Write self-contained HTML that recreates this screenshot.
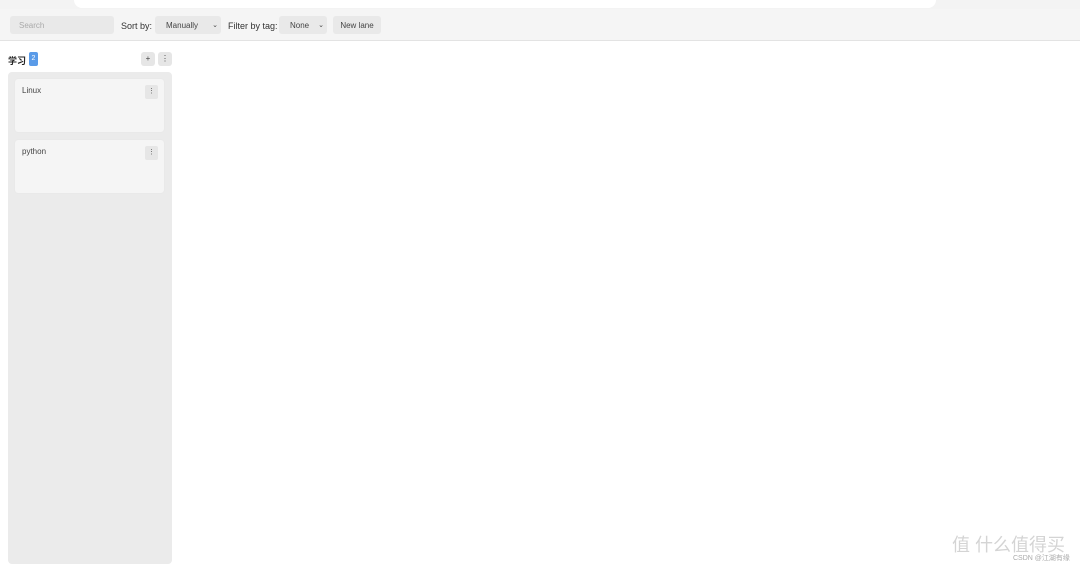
<!DOCTYPE html>
<html><head><meta charset="utf-8"><style>
*{box-sizing:border-box;margin:0;padding:0}
body{width:1080px;height:565px;background:#fff;font-family:"Liberation Sans","Noto Sans CJK SC",sans-serif;position:relative;overflow:hidden}
.chrome{position:absolute;left:0;top:0;width:1080px;height:9px;background:#f3f3f3}
.addr{position:absolute;left:74px;top:-8px;width:862px;height:16px;background:#fff;border-radius:8px}
.bar{position:absolute;left:0;top:9px;width:1080px;height:32px;background:#f5f5f5;border-bottom:1px solid #e3e3e3}
.ctl{position:absolute;top:7px;height:18px;background:#e9e9e9;border-radius:3px;font-size:8px;color:#444;line-height:20px}
.lbl{position:absolute;top:7px;font-size:9px;color:#333;line-height:20px}
.lane{position:absolute;left:8px;top:72px;width:164px;height:492px;background:#ebebeb;border-radius:4px}
.card{position:absolute;left:7px;width:149px;height:53px;background:#f5f5f5;border-radius:3px;box-shadow:0 0 1px #ddd}
.card span{position:absolute;left:7px;top:7px;font-size:8px;color:#444}
.mb{position:absolute;right:6px;top:6px;width:13px;height:14px;background:#e6e6e6;border-radius:2px;font-size:7px;text-align:center;line-height:14px;color:#555}
.btn{position:absolute;top:52px;width:14px;height:14px;background:#e6e6e6;border-radius:3px;font-size:8px;text-align:center;line-height:14px;color:#444}
</style></head><body>
<div class="chrome"><div class="addr"></div></div>
<div class="bar">
<div class="ctl" style="left:10px;width:104px;padding-left:9px;color:#aaa">Search</div>
<div class="lbl" style="left:121px">Sort by:</div>
<div class="ctl" style="left:155px;width:66px;padding-left:11px">Manually<span style="position:absolute;right:3px;font-size:7px">⌄</span></div>
<div class="lbl" style="left:228px">Filter by tag:</div>
<div class="ctl" style="left:279px;width:48px;padding-left:11px">None<span style="position:absolute;right:3px;font-size:7px">⌄</span></div>
<div class="ctl" style="left:333px;width:48px;text-align:center">New lane</div>
</div>
<div style="position:absolute;left:8px;top:54px;font-size:9px;font-weight:bold;color:#222">学习</div>
<div style="position:absolute;left:29px;top:52px;width:9px;height:14px;background:#5a9be8;border-radius:2px;color:#fff;font-size:7px;text-align:center;line-height:14px">2</div>
<div class="btn" style="left:141px">+</div>
<div class="btn" style="left:158px">⋮</div>
<div class="lane">
<div class="card" style="top:7px"><span>Linux</span><div class="mb">⋮</div></div>
<div class="card" style="top:68px"><span>python</span><div class="mb">⋮</div></div>
</div>
<div style="position:absolute;left:952px;top:531px;font-size:18px;color:#d4d4d4">值 什么值得买</div>
<div style="position:absolute;left:1013px;top:553px;font-size:7px;color:#aaa">CSDN @江湖有缘</div>
</body></html>
